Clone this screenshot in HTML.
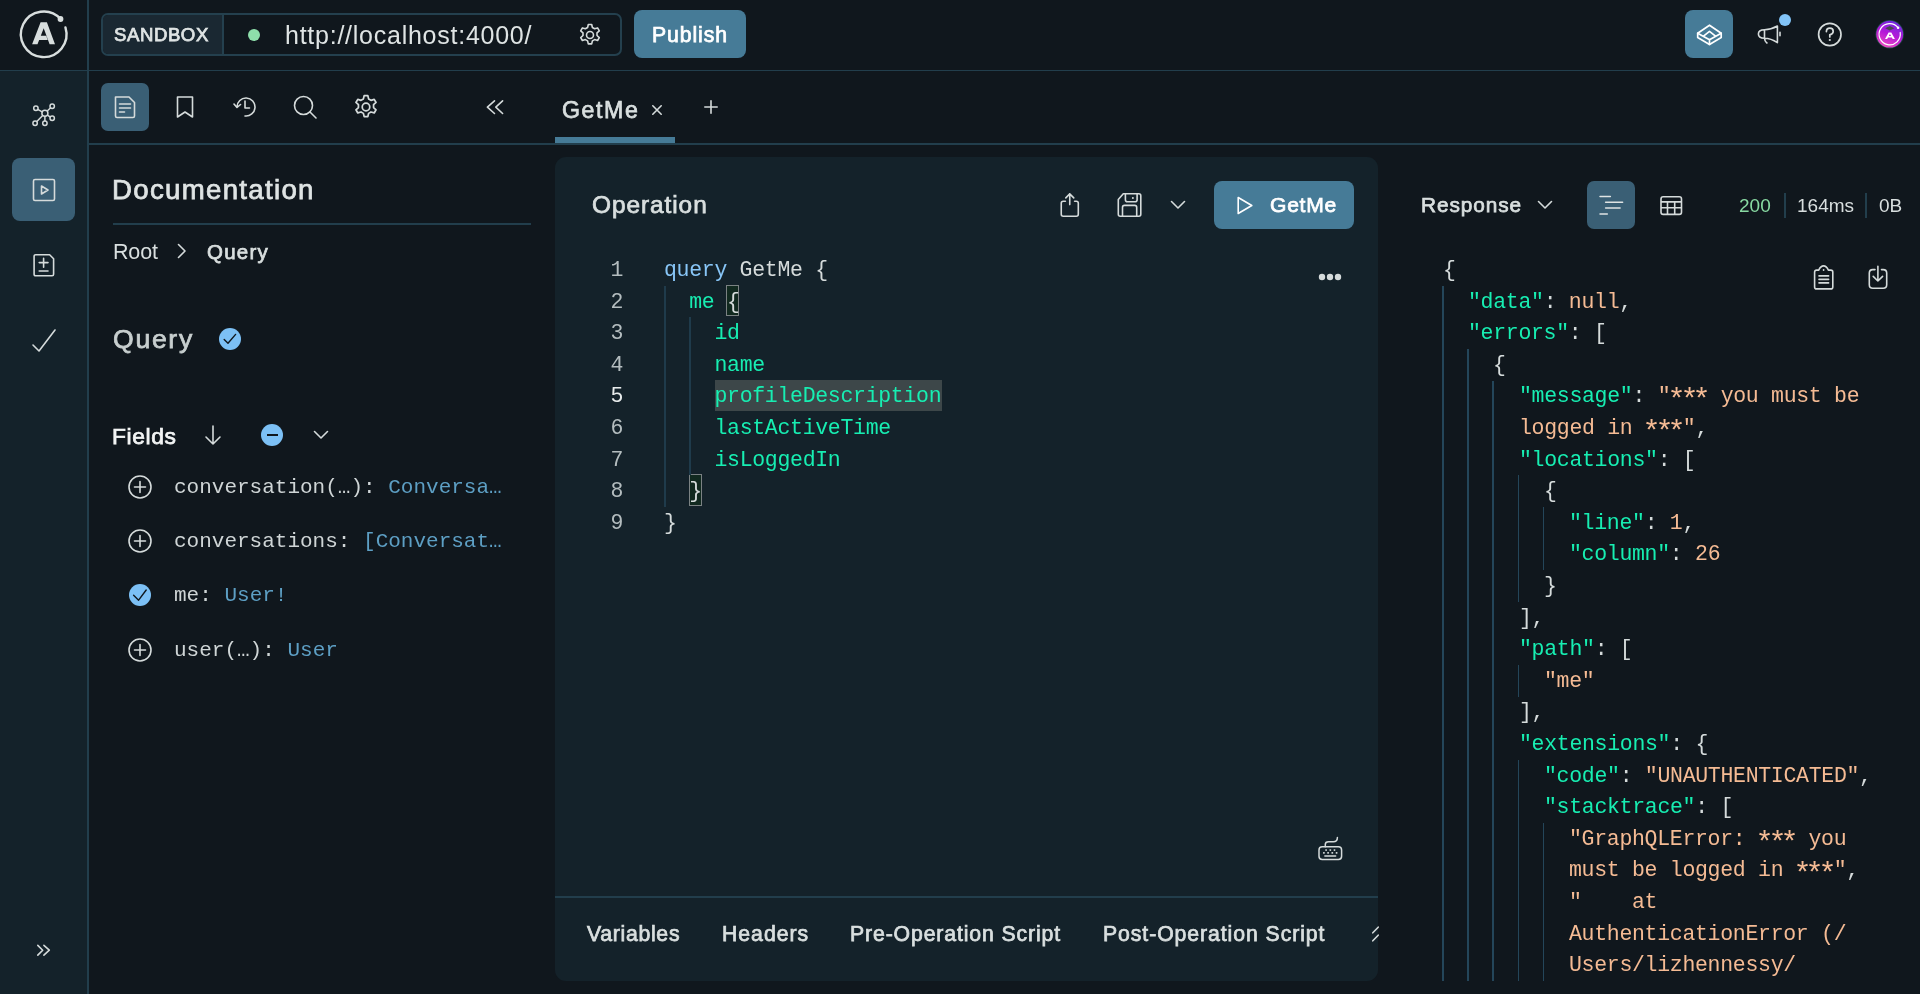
<!DOCTYPE html>
<html><head><meta charset="utf-8">
<style>
*{box-sizing:border-box;margin:0;padding:0}
html,body{width:1920px;height:994px;overflow:hidden;background:#10171d;font-family:"Liberation Sans",sans-serif;color:#d9dfdf}
.a{position:absolute}
svg{display:block;overflow:visible}
.ic{fill:none;stroke:#d5dbdb;stroke-width:1.6;stroke-linecap:round;stroke-linejoin:round}
.mono{font-family:"Liberation Mono",monospace}
.t{white-space:pre;line-height:1;will-change:transform}
</style></head><body>

<!-- left nav -->
<div class="a" style="left:0;top:71px;width:87px;height:923px;background:#14222a"></div>
<div class="a" style="left:87px;top:0;width:2px;height:994px;background:#223e4c"></div>
<div class="a" style="left:0;top:70px;width:1920px;height:1px;background:#223e4c"></div>
<div class="a" style="left:89px;top:143px;width:1831px;height:2px;background:#223e4c"></div>

<!-- logo -->
<svg class="a" style="left:0;top:0" width="88" height="70" viewBox="0 0 88 70">
  <path d="M65.44 27.44 A22.8 22.8 0 1 1 60.56 18.95" fill="none" stroke="#d8dede" stroke-width="2.4" stroke-linecap="round"/>
  <circle cx="60.5" cy="19" r="2.9" fill="#d8dede"/>
  <path d="M32.1 44.2 L40.6 22.2 H46.9 L55 44.2 H49.6 L43.7 28.3 L37.5 44.2 Z M37.6 35.8 H46.2 L47.7 40 H37.2 Z" fill="#d8dede"/>
</svg>
<!-- sandbox pill -->
<div class="a" style="left:101px;top:13px;width:521px;height:43px;border:2px solid #24404e;border-radius:7px;overflow:hidden">
  <div class="a" style="left:0;top:0;width:121px;height:100%;background:#1a2832;border-right:2px solid #24404e"></div>
</div>
<div class="a t" style="left:114.4px;top:25.85px;font-size:18.6px;-webkit-text-stroke-width:0.75px;letter-spacing:0.56px;color:#dfe4e4">SANDBOX</div>
<div class="a" style="left:248px;top:29px;width:12px;height:12px;border-radius:50%;background:#8edfab"></div>
<div class="a t" style="left:285px;top:22.5px;font-size:25px;letter-spacing:0.75px;color:#dfe4e4">http://localhost:4000/</div>
<!-- gear -->
<svg class="a ic" style="left:578.4px;top:22.5px" width="24" height="24" viewBox="0 0 24 24"><path d="M10.3 1.5h3.4l.7 3 2.2 1.3 3-.9 1.7 2.9-2.3 2.1v2.6l2.3 2.1-1.7 2.9-3-.9-2.2 1.3-.7 3h-3.4l-.7-3-2.2-1.3-3 .9-1.7-2.9 2.3-2.1v-2.6L2.7 7.8l1.7-2.9 3 .9 2.2-1.3z"/><circle cx="12" cy="12" r="3.5"/></svg>

<!-- publish -->
<div class="a" style="left:634px;top:10px;width:112px;height:48px;border-radius:8px;background:#467b97"></div>
<div class="a t" style="left:652.0px;top:23.6px;font-size:21.22px;-webkit-text-stroke-width:0.75px;letter-spacing:0.9px;color:#fff">Publish</div>

<!-- right header -->
<div class="a" style="left:1685px;top:10px;width:48px;height:48px;border-radius:8px;background:#467b97"></div>
<svg class="a" style="left:1690px;top:10px" width="40" height="50" viewBox="0 0 40 50"><g fill="none" stroke="#fff" stroke-width="1.7" stroke-linejoin="round" stroke-linecap="round"><path d="M7.7 23.2 L19.5 15.2 L31.2 23.2 V27.6 L19.5 34.4 L7.7 27.6 Z"/><path d="M7.7 23.2 L19.5 29.8 L31.2 23.2 M19.5 29.8 V34.4"/><path d="M13.8 25.8 L19.5 21.3 L25.2 25.8"/></g></svg>
<svg class="a" style="left:1750px;top:10px" width="40" height="40" viewBox="0 0 40 40"><g fill="none" stroke="#d5dbdb" stroke-width="1.6" stroke-linejoin="round" stroke-linecap="round"><path d="M14.5 19.7 V28.2 M14.5 19.7 Q8.4 19.7 8.4 24 Q8.4 28.2 14.5 28.2 Q21 28.2 27.4 32.6 V16 Q21 19.7 14.5 19.7 Z M14.5 28.2 Q14.6 31.2 16.9 33 M30 22.3 V25.8"/></g></svg>
<div class="a" style="left:1778.6px;top:13.5px;width:12px;height:12px;border-radius:50%;background:#82c4f8"></div>
<svg class="a" style="left:1810px;top:14px" width="40" height="40" viewBox="0 0 40 40"><g fill="none" stroke="#d5dbdb" stroke-width="1.7" stroke-linecap="round"><circle cx="19.8" cy="20.5" r="11.2"/><path d="M16.4 17.6 Q16.4 14.2 19.8 14.2 Q23.2 14.2 23.2 17.4 Q23.2 19.5 19.8 20.9 V23"/></g><circle cx="19.8" cy="26" r="1.1" fill="#d5dbdb"/></svg>
<svg class="a" style="left:1870px;top:14px" width="40" height="40" viewBox="0 0 40 40">
 <defs><linearGradient id="av" x1="0.7" y1="0" x2="0.3" y2="1"><stop offset="0" stop-color="#6a2de0"/><stop offset="0.5" stop-color="#b418d8"/><stop offset="1" stop-color="#f050c0"/></linearGradient></defs>
 <circle cx="19.7" cy="20.2" r="14.2" fill="#1d4a48"/>
 <circle cx="19.7" cy="20.2" r="13.4" fill="url(#av)"/>
  <path d="M30.16 18.47 A10.6 10.6 0 1 1 28.08 13.7" fill="none" stroke="#fff" stroke-width="1.2" stroke-linecap="round"/>
 <circle cx="28.08" cy="13.7" r="1.3" fill="#fff"/>
 <path d="M15 24.9 L18.6 18.4 H21.3 L24.9 24.9 H22.7 L19.95 20.1 L17.2 24.9 Z M17.9 22.1 H21.6 L22.2 23.4 H17.3 Z" fill="#fff"/>
 <path d="M15.3 14.3 L19.85 12.1 L24.4 14.3 L19.85 16.4 Z" fill="#454b4d"/>
</svg>

<!-- left nav icons -->
<svg class="a" style="left:32px;top:103px" width="24" height="24" viewBox="0 0 24 24"><g stroke="#d5dbdb" stroke-width="1.5"><path d="M12.9 10.3 L3.9 5.3 M12.9 10.3 L20.2 3.3 M12.9 10.3 L20.2 15.3 M12.9 10.3 L3.1 20.2 M12.9 10.3 V20.2"/><g fill="#14222a"><circle cx="12.9" cy="10.3" r="3"/><circle cx="3.9" cy="5.3" r="2.2"/><circle cx="20.2" cy="3.3" r="2.2"/><circle cx="20.2" cy="15.3" r="2.2"/><circle cx="3.1" cy="20.2" r="2.2"/><circle cx="12.9" cy="20.2" r="2.2"/></g></g></svg>
<div class="a" style="left:12px;top:158px;width:63px;height:63px;border-radius:8px;background:#3a5f75"></div>
<svg class="a ic" style="left:32px;top:178px" width="24" height="24" viewBox="0 0 24 24"><rect x="1.5" y="1.5" width="21" height="21" rx="1.5"/><path d="M9.5 8 L16 12 L9.5 16 Z"/></svg>
<svg class="a ic" style="left:33px;top:253px" width="22" height="24" viewBox="0 0 22 24"><path d="M2.6 1.7 H16.6 L20.6 5.7 V21.2 Q20.6 22.7 19.1 22.7 H2.6 Q1.1 22.7 1.1 21.2 V3.2 Q1.1 1.7 2.6 1.7 Z M10.6 5.4 V14.2 M6.2 9.6 H15 M6.2 18 H15"/></svg>
<svg class="a ic" style="left:31px;top:329px" width="26" height="26" viewBox="0 0 26 26"><path d="M2 16 L8 22 L24 1"/></svg>
<svg class="a ic" style="left:36px;top:943px" width="16" height="14" viewBox="0 0 16 14"><path d="M1.8 2.4 L6.7 7.2 L1.8 12.1 M7.9 2.4 L13.3 7.2 L7.9 12.1"/></svg>

<!-- toolbar row -->
<div class="a" style="left:101px;top:83px;width:48px;height:48px;border-radius:7px;background:#3a5f75"></div>
<svg class="a ic" style="left:113px;top:95px" width="24" height="24" viewBox="0 0 24 24"><path d="M2.5 2 H16 L21.5 7.5 V21 Q21.5 22.5 20 22.5 H4 Q2.5 22.5 2.5 21 Z M6.5 9 H17.5 M6.5 13 H17.5 M6.5 17 H11.5"/></svg>
<svg class="a ic" style="left:173px;top:95px" width="24" height="24" viewBox="0 0 24 24"><path d="M4.5 2 H19.5 V22 L12 17 L4.5 22 Z"/></svg>
<svg class="a ic" style="left:233px;top:95px" width="24" height="24" viewBox="0 0 24 24"><path d="M4 12 A9 9 0 1 1 12 21 M1 9 L4 12.5 L7.5 9.5 M12 6 V13 H16.5"/></svg>
<svg class="a ic" style="left:293px;top:95px" width="24" height="24" viewBox="0 0 24 24"><circle cx="10.5" cy="10.5" r="9"/><path d="M17 17 L23 23"/></svg>
<svg class="a ic" style="left:353.5px;top:95px" width="24" height="24" viewBox="0 0 24 24" transform="scale(1.08)"><path d="M10.3 1.5h3.4l.7 3 2.2 1.3 3-.9 1.7 2.9-2.3 2.1v2.6l2.3 2.1-1.7 2.9-3-.9-2.2 1.3-.7 3h-3.4l-.7-3-2.2-1.3-3 .9-1.7-2.9 2.3-2.1v-2.6L2.7 7.8l1.7-2.9 3 .9 2.2-1.3z"/><circle cx="12" cy="12" r="3.5"/></svg>
<svg class="a ic" style="left:486px;top:99px" width="18" height="16" viewBox="0 0 18 16"><path d="M8.5 1.9 L1.4 8.2 L8.5 14.5 M16.6 1.9 L9.8 8.2 L16.6 14.5"/></svg>

<!-- tab -->
<div class="a t" style="left:562.2px;top:99.0px;font-size:23.11px;-webkit-text-stroke-width:0.75px;letter-spacing:1.6px;color:#d9dfdf">GetMe</div>
<svg class="a ic" style="left:651.5px;top:105px" width="10" height="10" viewBox="0 0 10 10"><path d="M0.8 0.8 L9.2 9.2 M9.2 0.8 L0.8 9.2"/></svg>
<svg class="a ic" style="left:703.5px;top:100px" width="14" height="14" viewBox="0 0 14 14"><path d="M7 0.8 V13.2 M0.8 7 H13.2"/></svg>
<div class="a" style="left:555px;top:137px;width:120px;height:6px;background:#467b97"></div>

<!-- docs panel -->
<div class="a t" style="left:111.75px;top:176.2px;font-size:27.62px;-webkit-text-stroke-width:0.75px;letter-spacing:1.31px;color:#dfe4e4">Documentation</div>
<div class="a" style="left:113px;top:223px;width:418px;height:1.5px;background:#223e4c"></div>
<div class="a t" style="left:112.5px;top:242.4px;font-size:21.51px;letter-spacing:-0.17px;color:#d9dfdf">Root</div>
<svg class="a ic" style="left:177px;top:243px" width="10" height="16" viewBox="0 0 10 16"><path d="M1.5 1.5 L8 8 L1.5 14.5"/></svg>
<div class="a t" style="left:207.0px;top:242.0px;font-size:20.49px;-webkit-text-stroke-width:0.75px;letter-spacing:1.25px;color:#d9dfdf">Query</div>

<div class="a t" style="left:112.7px;top:326.0px;font-size:26.6px;-webkit-text-stroke-width:0.75px;letter-spacing:1.7px;color:#c8cfcf">Query</div>
<div class="a" style="left:219px;top:328px;width:22px;height:22px;border-radius:50%;background:#7cc0f5"></div>
<svg class="a" style="left:219px;top:328px" width="22" height="22" viewBox="0 0 22 22"><path d="M5.2 11.4 L9 15.2 L16.6 6.4" fill="none" stroke="#10171d" stroke-width="1.4" stroke-linecap="round" stroke-linejoin="round"/></svg>

<div class="a t" style="left:112.0px;top:425.0px;font-size:22.82px;-webkit-text-stroke-width:0.75px;letter-spacing:0.6px;color:#f2f4f4">Fields</div>
<svg class="a ic" style="left:204px;top:425px" width="18" height="20" viewBox="0 0 18 20"><path d="M9 1 V19 M2 12 L9 19 L16 12"/></svg>
<div class="a" style="left:261px;top:424px;width:22px;height:22px;border-radius:50%;background:#7cc0f5"></div>
<div class="a" style="left:266.5px;top:434.3px;width:11px;height:1.4px;background:#10171d"></div>
<svg class="a ic" style="left:313px;top:430px" width="16" height="10" viewBox="0 0 16 10"><path d="M1.5 1.5 L8 8 L14.5 1.5"/></svg>

<!-- field rows -->
<svg class="a ic" style="left:128px;top:475px" width="24" height="24" viewBox="0 0 24 24"><circle cx="12" cy="12" r="11"/><path d="M12 6.5 V17.5 M6.5 12 H17.5"/></svg>
<div class="a t mono" style="left:174px;top:477px;font-size:21px"><span style="color:#cfd5d6">conversation(…): </span><span style="color:#5d9fc4">Conversa…</span></div>
<svg class="a ic" style="left:128px;top:529.2px" width="24" height="24" viewBox="0 0 24 24"><circle cx="12" cy="12" r="11"/><path d="M12 6.5 V17.5 M6.5 12 H17.5"/></svg>
<div class="a t mono" style="left:174px;top:531.2px;font-size:21px"><span style="color:#cfd5d6">conversations: </span><span style="color:#5d9fc4">[Conversat…</span></div>
<div class="a" style="left:129px;top:584px;width:22px;height:22px;border-radius:50%;background:#7cc0f5"></div>
<svg class="a" style="left:129px;top:584px" width="22" height="22" viewBox="0 0 22 22"><path d="M4.6 11.2 L9.6 16.2 L17.2 6" fill="none" stroke="#10171d" stroke-width="1.4" stroke-linecap="round" stroke-linejoin="round"/></svg>
<div class="a t mono" style="left:174px;top:585.4px;font-size:21px"><span style="color:#cfd5d6">me: </span><span style="color:#5d9fc4">User!</span></div>
<svg class="a ic" style="left:128px;top:637.6px" width="24" height="24" viewBox="0 0 24 24"><circle cx="12" cy="12" r="11"/><path d="M12 6.5 V17.5 M6.5 12 H17.5"/></svg>
<div class="a t mono" style="left:174px;top:639.6px;font-size:21px"><span style="color:#cfd5d6">user(…): </span><span style="color:#5d9fc4">User</span></div>

<!-- operation card -->
<div class="a" style="left:555px;top:157px;width:823px;height:824px;border-radius:11px;background:#14222a"></div>
<div class="a t" style="left:592.0px;top:193.2px;font-size:24.42px;-webkit-text-stroke-width:0.75px;letter-spacing:0.94px;color:#d9dfdf">Operation</div>
<svg class="a ic" style="left:1058px;top:190px" width="30" height="30" viewBox="0 0 30 30"><path d="M7.4 11.25 H5.25 Q3.25 11.25 3.25 13.25 V24.25 Q3.25 26.25 5.25 26.25 H18.3 Q20.3 26.25 20.3 24.25 V13.25 Q20.3 11.25 18.3 11.25 H16.6 M11.75 3.9 V14.6 M7.8 7.9 L11.75 3.9 L15.75 7.9"/></svg>
<svg class="a ic" style="left:1115px;top:190px" width="30" height="30" viewBox="0 0 30 30"><path d="M8.3 3.75 H23.8 Q25.8 3.75 25.8 5.75 V24.25 Q25.8 26.25 23.8 26.25 H5.3 Q3.3 26.25 3.3 24.25 V9.6 Z M10.4 3.75 V9.7 Q10.4 11.7 12.4 11.7 H20.1 Q22.1 11.7 22.1 9.7 V3.75 M7.5 26.25 V17.4 Q7.5 15.4 9.5 15.4 H19.7 Q21.7 15.4 21.7 17.4 V26.25"/><circle cx="17.9" cy="7.9" r="1" fill="#d5dbdb" stroke="none"/></svg>
<svg class="a ic" style="left:1170px;top:200px" width="16" height="10" viewBox="0 0 16 10"><path d="M1.5 1.5 L8 8 L14.5 1.5"/></svg>
<div class="a" style="left:1214px;top:181px;width:140px;height:48px;border-radius:8px;background:#467b97"></div>
<svg class="a ic" style="left:1236px;top:196px" width="18" height="19" viewBox="0 0 18 19"><path d="M2.2 1.5 L15.8 9.5 L2.2 17.5 Z" stroke="#fff"/></svg>
<div class="a t" style="left:1269.5px;top:194.2px;font-size:21.08px;-webkit-text-stroke-width:0.75px;letter-spacing:0.75px;color:#fff">GetMe</div>
<svg class="a" style="left:1318px;top:271px" width="24" height="12" viewBox="0 0 24 12"><circle cx="4" cy="6" r="3.2" fill="#d5dbdb"/><circle cx="12" cy="6" r="3.2" fill="#d5dbdb"/><circle cx="20" cy="6" r="3.2" fill="#d5dbdb"/></svg>
<svg class="a" style="left:1316px;top:834px" width="30" height="30" viewBox="0 0 30 30"><g fill="none" stroke="#d5dbdb" stroke-width="1.5" stroke-linecap="round"><rect x="3" y="12.7" width="22.6" height="12.7" rx="3.2"/><path d="M9.3 12.7 V10.4 Q9.3 7.7 12.6 7.7 H17.3 Q21.4 7.7 21.4 3.4"/><path d="M9.9 16.1 H10.3 M14.1 16.1 H14.5 M18.3 16.1 H18.7 M7.7 18.9 H8.1 M11.9 18.9 H12.3 M16.1 18.9 H16.5 M20.4 18.9 H20.8 M8.9 22 H19.6" stroke-width="1.6"/></g></svg>
<div class="a" style="left:555px;top:896px;width:823px;height:1.5px;background:#223e4c"></div>
<div class="a t" style="left:587.4px;top:923.0px;font-size:21.22px;-webkit-text-stroke-width:0.75px;letter-spacing:0.7px;color:#d9dfdf">Variables</div>
<div class="a t" style="left:722.0px;top:923.0px;font-size:21.22px;-webkit-text-stroke-width:0.75px;letter-spacing:1.0px;color:#d9dfdf">Headers</div>
<div class="a t" style="left:849.9px;top:923.0px;font-size:21.22px;-webkit-text-stroke-width:0.75px;letter-spacing:0.88px;color:#d9dfdf">Pre-Operation Script</div>
<div class="a t" style="left:1102.6px;top:923.0px;font-size:21.22px;-webkit-text-stroke-width:0.75px;letter-spacing:0.93px;color:#d9dfdf">Post-Operation Script</div>

<svg class="a" style="left:1365px;top:920px" width="14" height="28" viewBox="0 0 14 28"><path d="M7.8 12.8 L13.2 7.2 M7.8 20.8 L13.2 15.2" stroke="#d5dbdb" stroke-width="1.6" stroke-linecap="round"/></svg>
<!-- code -->
<div class="a" style="left:714.5px;top:379.60px;width:227px;height:31.6px;background:#3d4749"></div>
<div class="a" style="left:726.4px;top:284.80px;width:12.8px;height:31.4px;border:1.5px solid #7b8283;background:#11291f"></div>
<div class="a" style="left:689px;top:474.40px;width:12.8px;height:31.4px;border:1.5px solid #7b8283;background:#11291f"></div>
<div class="a" style="left:664px;top:285.80px;width:1.5px;height:221.20px;background:#1f3b4b"></div>
<div class="a" style="left:689px;top:317.40px;width:1.5px;height:158.00px;background:#1f3b4b"></div>
<div class="a t mono" style="left:583.3px;top:255.00px;width:40px;text-align:right;font-size:21.5px;letter-spacing:-0.3px;line-height:31.6px;color:#b4bdbf">1</div>
<div class="a t mono" style="left:664px;top:255.00px;font-size:21.5px;letter-spacing:-0.3px;line-height:31.6px"><span style="color:#88c6f7">query</span><span style="color:#d5dbdb"> GetMe {</span></div>
<div class="a t mono" style="left:583.3px;top:286.60px;width:40px;text-align:right;font-size:21.5px;letter-spacing:-0.3px;line-height:31.6px;color:#b4bdbf">2</div>
<div class="a t mono" style="left:664px;top:286.60px;font-size:21.5px;letter-spacing:-0.3px;line-height:31.6px"><span style="color:#d5dbdb">  </span><span style="color:#17eeb2">me</span><span style="color:#d5dbdb"> </span><span style="color:#d5dbdb">{</span></div>
<div class="a t mono" style="left:583.3px;top:318.20px;width:40px;text-align:right;font-size:21.5px;letter-spacing:-0.3px;line-height:31.6px;color:#b4bdbf">3</div>
<div class="a t mono" style="left:664px;top:318.20px;font-size:21.5px;letter-spacing:-0.3px;line-height:31.6px"><span style="color:#d5dbdb">    </span><span style="color:#17eeb2">id</span></div>
<div class="a t mono" style="left:583.3px;top:349.80px;width:40px;text-align:right;font-size:21.5px;letter-spacing:-0.3px;line-height:31.6px;color:#b4bdbf">4</div>
<div class="a t mono" style="left:664px;top:349.80px;font-size:21.5px;letter-spacing:-0.3px;line-height:31.6px"><span style="color:#d5dbdb">    </span><span style="color:#17eeb2">name</span></div>
<div class="a t mono" style="left:583.3px;top:381.40px;width:40px;text-align:right;font-size:21.5px;letter-spacing:-0.3px;line-height:31.6px;color:#e8ecec">5</div>
<div class="a t mono" style="left:664px;top:381.40px;font-size:21.5px;letter-spacing:-0.3px;line-height:31.6px"><span style="color:#d5dbdb">    </span><span style="color:#17eeb2">profileDescription</span></div>
<div class="a t mono" style="left:583.3px;top:413.00px;width:40px;text-align:right;font-size:21.5px;letter-spacing:-0.3px;line-height:31.6px;color:#b4bdbf">6</div>
<div class="a t mono" style="left:664px;top:413.00px;font-size:21.5px;letter-spacing:-0.3px;line-height:31.6px"><span style="color:#d5dbdb">    </span><span style="color:#17eeb2">lastActiveTime</span></div>
<div class="a t mono" style="left:583.3px;top:444.60px;width:40px;text-align:right;font-size:21.5px;letter-spacing:-0.3px;line-height:31.6px;color:#b4bdbf">7</div>
<div class="a t mono" style="left:664px;top:444.60px;font-size:21.5px;letter-spacing:-0.3px;line-height:31.6px"><span style="color:#d5dbdb">    </span><span style="color:#17eeb2">isLoggedIn</span></div>
<div class="a t mono" style="left:583.3px;top:476.20px;width:40px;text-align:right;font-size:21.5px;letter-spacing:-0.3px;line-height:31.6px;color:#b4bdbf">8</div>
<div class="a t mono" style="left:664px;top:476.20px;font-size:21.5px;letter-spacing:-0.3px;line-height:31.6px"><span style="color:#d5dbdb">  </span><span style="color:#d5dbdb">}</span></div>
<div class="a t mono" style="left:583.3px;top:507.80px;width:40px;text-align:right;font-size:21.5px;letter-spacing:-0.3px;line-height:31.6px;color:#b4bdbf">9</div>
<div class="a t mono" style="left:664px;top:507.80px;font-size:21.5px;letter-spacing:-0.3px;line-height:31.6px"><span style="color:#d5dbdb">}</span></div>

<!-- response header -->
<div class="a t" style="left:1420.6px;top:195.0px;font-size:20.78px;-webkit-text-stroke-width:0.75px;letter-spacing:0.94px;color:#d9dfdf">Response</div>
<svg class="a ic" style="left:1537px;top:200px" width="16" height="10" viewBox="0 0 16 10"><path d="M1.5 1.5 L8 8 L14.5 1.5"/></svg>
<div class="a" style="left:1587px;top:181px;width:48px;height:48px;border-radius:7px;background:#3a5f75"></div>
<svg class="a" style="left:1580px;top:175px" width="120" height="60" viewBox="0 0 120 60"><g fill="none" stroke="#dfe4e4" stroke-width="1.5" stroke-linecap="round"><path d="M20 21.6 H30.4 M25.6 27.3 H42.6 M25.6 32.9 H40.1 M20 39.1 H27.3"/></g><g fill="none" stroke="#d5dbdb" stroke-width="1.6" stroke-linejoin="round"><rect x="81" y="21.8" width="20.5" height="17.6" rx="2.2"/><path d="M81 26.9 H101.5 M81 32.8 H101.5 M87.5 26.9 V39.4 M94.7 26.9 V39.4"/></g></svg>
<div class="a t" style="left:1738.5px;top:196px;font-size:19px;color:#88d9a2">200</div>
<div class="a" style="left:1784px;top:193px;width:1.5px;height:25px;background:#223e4c"></div>
<div class="a t" style="left:1797px;top:196px;font-size:19px;color:#d9dfdf">164ms</div>
<div class="a" style="left:1865px;top:193px;width:1.5px;height:25px;background:#223e4c"></div>
<div class="a t" style="left:1879px;top:196px;font-size:19px;color:#d9dfdf">0B</div>
<svg class="a ic" style="left:1813px;top:265px" width="22" height="26" viewBox="0 0 22 26"><path d="M5.75 5.1 H3.6 Q1.6 5.1 1.6 7.1 V21.9 Q1.6 23.9 3.6 23.9 H17.8 Q19.8 23.9 19.8 21.9 V7.1 Q19.8 5.1 17.8 5.1 H15.4 Q13.5 0.9 10.6 0.9 Q7.7 0.9 5.75 5.1 Z M6 10.9 H15.6 M6 14.4 H15.6 M6 17.9 H15.6"/><circle cx="10.6" cy="5" r="0.9" fill="#d5dbdb" stroke="none"/></svg>
<svg class="a ic" style="left:1867px;top:265px" width="22" height="26" viewBox="0 0 22 26"><path d="M8 4.6 H5.8 Q2.3 4.6 2.3 8.1 V19.8 Q2.3 23.3 5.8 23.3 H16.2 Q19.7 23.3 19.7 19.8 V8.1 Q19.7 4.6 16.2 4.6 H14.5 M10.9 1.2 V16 M6.2 11.4 L10.9 16 L15.6 11.4"/></svg>

<div class="a" style="left:1442.0px;top:285.80px;width:1.5px;height:695.20px;background:#24465a"></div>
<div class="a" style="left:1467.2px;top:349.00px;width:1.5px;height:632.00px;background:#24465a"></div>
<div class="a" style="left:1492.4px;top:380.60px;width:1.5px;height:600.40px;background:#24465a"></div>
<div class="a" style="left:1517.6px;top:475.40px;width:1.5px;height:126.40px;background:#24465a"></div>
<div class="a" style="left:1517.6px;top:665.00px;width:1.5px;height:31.60px;background:#24465a"></div>
<div class="a" style="left:1517.6px;top:759.80px;width:1.5px;height:221.20px;background:#24465a"></div>
<div class="a" style="left:1542.8px;top:507.00px;width:1.5px;height:63.20px;background:#24465a"></div>
<div class="a" style="left:1542.8px;top:823.00px;width:1.5px;height:158.00px;background:#24465a"></div>
<div class="a t mono" style="left:1443.0px;top:255.00px;font-size:21.5px;letter-spacing:-0.3px;line-height:31.6px"><span style="color:#d5dbdb">{</span></div>
<div class="a t mono" style="left:1468.2px;top:286.60px;font-size:21.5px;letter-spacing:-0.3px;line-height:31.6px"><span style="color:#17eeb2">"data"</span><span style="color:#d5dbdb">: </span><span style="color:#f5bb94">null</span><span style="color:#d5dbdb">,</span></div>
<div class="a t mono" style="left:1468.2px;top:318.20px;font-size:21.5px;letter-spacing:-0.3px;line-height:31.6px"><span style="color:#17eeb2">"errors"</span><span style="color:#d5dbdb">: [</span></div>
<div class="a t mono" style="left:1493.4px;top:349.80px;font-size:21.5px;letter-spacing:-0.3px;line-height:31.6px"><span style="color:#d5dbdb">{</span></div>
<div class="a t mono" style="left:1518.6px;top:381.40px;font-size:21.5px;letter-spacing:-0.3px;line-height:31.6px"><span style="color:#17eeb2">"message"</span><span style="color:#d5dbdb">: </span><span style="color:#f5bb94">"<span style="display:inline-block;width:12.6px;text-align:center;transform:translateY(4.5px) scale(1.4)">*</span><span style="display:inline-block;width:12.6px;text-align:center;transform:translateY(4.5px) scale(1.4)">*</span><span style="display:inline-block;width:12.6px;text-align:center;transform:translateY(4.5px) scale(1.4)">*</span> you must be</span></div>
<div class="a t mono" style="left:1518.6px;top:413.00px;font-size:21.5px;letter-spacing:-0.3px;line-height:31.6px"><span style="color:#f5bb94">logged in <span style="display:inline-block;width:12.6px;text-align:center;transform:translateY(4.5px) scale(1.4)">*</span><span style="display:inline-block;width:12.6px;text-align:center;transform:translateY(4.5px) scale(1.4)">*</span><span style="display:inline-block;width:12.6px;text-align:center;transform:translateY(4.5px) scale(1.4)">*</span>"</span><span style="color:#d5dbdb">,</span></div>
<div class="a t mono" style="left:1518.6px;top:444.60px;font-size:21.5px;letter-spacing:-0.3px;line-height:31.6px"><span style="color:#17eeb2">"locations"</span><span style="color:#d5dbdb">: [</span></div>
<div class="a t mono" style="left:1543.8px;top:476.20px;font-size:21.5px;letter-spacing:-0.3px;line-height:31.6px"><span style="color:#d5dbdb">{</span></div>
<div class="a t mono" style="left:1569.0px;top:507.80px;font-size:21.5px;letter-spacing:-0.3px;line-height:31.6px"><span style="color:#17eeb2">"line"</span><span style="color:#d5dbdb">: </span><span style="color:#f5bb94">1</span><span style="color:#d5dbdb">,</span></div>
<div class="a t mono" style="left:1569.0px;top:539.40px;font-size:21.5px;letter-spacing:-0.3px;line-height:31.6px"><span style="color:#17eeb2">"column"</span><span style="color:#d5dbdb">: </span><span style="color:#f5bb94">26</span></div>
<div class="a t mono" style="left:1543.8px;top:571.00px;font-size:21.5px;letter-spacing:-0.3px;line-height:31.6px"><span style="color:#d5dbdb">}</span></div>
<div class="a t mono" style="left:1518.6px;top:602.60px;font-size:21.5px;letter-spacing:-0.3px;line-height:31.6px"><span style="color:#d5dbdb">],</span></div>
<div class="a t mono" style="left:1518.6px;top:634.20px;font-size:21.5px;letter-spacing:-0.3px;line-height:31.6px"><span style="color:#17eeb2">"path"</span><span style="color:#d5dbdb">: [</span></div>
<div class="a t mono" style="left:1543.8px;top:665.80px;font-size:21.5px;letter-spacing:-0.3px;line-height:31.6px"><span style="color:#f5bb94">"me"</span></div>
<div class="a t mono" style="left:1518.6px;top:697.40px;font-size:21.5px;letter-spacing:-0.3px;line-height:31.6px"><span style="color:#d5dbdb">],</span></div>
<div class="a t mono" style="left:1518.6px;top:729.00px;font-size:21.5px;letter-spacing:-0.3px;line-height:31.6px"><span style="color:#17eeb2">"extensions"</span><span style="color:#d5dbdb">: {</span></div>
<div class="a t mono" style="left:1543.8px;top:760.60px;font-size:21.5px;letter-spacing:-0.3px;line-height:31.6px"><span style="color:#17eeb2">"code"</span><span style="color:#d5dbdb">: </span><span style="color:#f5bb94">"UNAUTHENTICATED"</span><span style="color:#d5dbdb">,</span></div>
<div class="a t mono" style="left:1543.8px;top:792.20px;font-size:21.5px;letter-spacing:-0.3px;line-height:31.6px"><span style="color:#17eeb2">"stacktrace"</span><span style="color:#d5dbdb">: [</span></div>
<div class="a t mono" style="left:1569.0px;top:823.80px;font-size:21.5px;letter-spacing:-0.3px;line-height:31.6px"><span style="color:#f5bb94">"GraphQLError: <span style="display:inline-block;width:12.6px;text-align:center;transform:translateY(4.5px) scale(1.4)">*</span><span style="display:inline-block;width:12.6px;text-align:center;transform:translateY(4.5px) scale(1.4)">*</span><span style="display:inline-block;width:12.6px;text-align:center;transform:translateY(4.5px) scale(1.4)">*</span> you</span></div>
<div class="a t mono" style="left:1569.0px;top:855.40px;font-size:21.5px;letter-spacing:-0.3px;line-height:31.6px"><span style="color:#f5bb94">must be logged in <span style="display:inline-block;width:12.6px;text-align:center;transform:translateY(4.5px) scale(1.4)">*</span><span style="display:inline-block;width:12.6px;text-align:center;transform:translateY(4.5px) scale(1.4)">*</span><span style="display:inline-block;width:12.6px;text-align:center;transform:translateY(4.5px) scale(1.4)">*</span>"</span><span style="color:#d5dbdb">,</span></div>
<div class="a t mono" style="left:1569.0px;top:887.00px;font-size:21.5px;letter-spacing:-0.3px;line-height:31.6px"><span style="color:#f5bb94">"    at</span></div>
<div class="a t mono" style="left:1569.0px;top:918.60px;font-size:21.5px;letter-spacing:-0.3px;line-height:31.6px"><span style="color:#f5bb94">AuthenticationError (/</span></div>
<div class="a t mono" style="left:1569.0px;top:950.20px;font-size:21.5px;letter-spacing:-0.3px;line-height:31.6px"><span style="color:#f5bb94">Users/lizhennessy/</span></div>
</body></html>
